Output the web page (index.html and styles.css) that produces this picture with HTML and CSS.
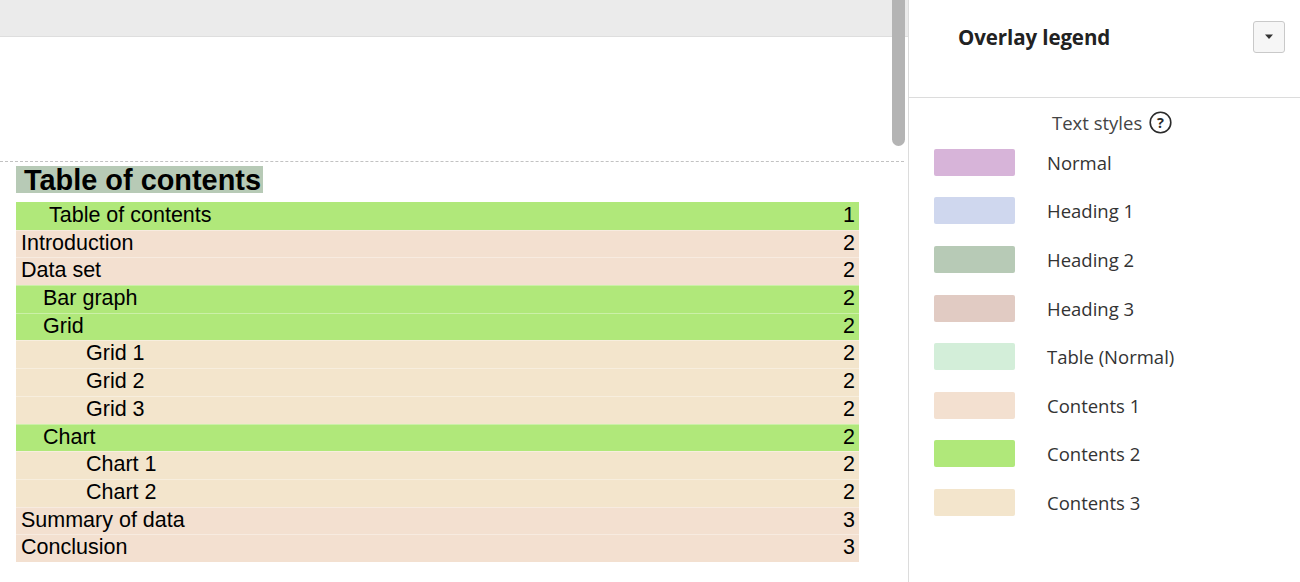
FILE: index.html
```html
<!DOCTYPE html>
<html lang="en">
<head>
<meta charset="utf-8">
<title>Overlay legend</title>
<link rel="stylesheet" href="styles.css">
</head>
<body>
<div class="app">
  <main class="doc">
    <div class="topbar"></div>
    <div class="page">
      <div class="page-break"></div>
      <h2 class="toc-heading"><span>Table of contents</span></h2>
      <div class="toc">
        <div class="row c2 self"><span>Table of contents</span><span>1</span></div>
        <div class="row c1"><span>Introduction</span><span>2</span></div>
        <div class="row c1"><span>Data set</span><span>2</span></div>
        <div class="row c2"><span>Bar graph</span><span>2</span></div>
        <div class="row c2"><span>Grid</span><span>2</span></div>
        <div class="row c3"><span>Grid 1</span><span>2</span></div>
        <div class="row c3"><span>Grid 2</span><span>2</span></div>
        <div class="row c3"><span>Grid 3</span><span>2</span></div>
        <div class="row c2"><span>Chart</span><span>2</span></div>
        <div class="row c3"><span>Chart 1</span><span>2</span></div>
        <div class="row c3"><span>Chart 2</span><span>2</span></div>
        <div class="row c1"><span>Summary of data</span><span>3</span></div>
        <div class="row c1"><span>Conclusion</span><span>3</span></div>
      </div>
    </div>
    <div class="scroll-thumb"></div>
  </main>
  <aside class="legend">
    <header class="legend-head">
      <h1 class="legend-title">Overlay legend</h1>
      <button class="dropdown" aria-label="Options">
        <svg width="10" height="6" viewBox="0 0 10 6"><path d="M1 0.5h8L5 5z" fill="#333"/></svg>
      </button>
    </header>
    <section class="styles">
      <div class="styles-title">Text styles
        <svg class="help" width="23" height="23" viewBox="0 0 23 23">
          <circle cx="11.5" cy="11.5" r="10.3" fill="none" stroke="#2a2a2a" stroke-width="1.6"/>
          <text x="11.5" y="16.8" text-anchor="middle" font-family="Open Sans, sans-serif" font-weight="700" font-size="14.5" fill="#2a2a2a">?</text>
        </svg>
      </div>
      <ul class="items">
        <li><span class="sw s-normal"></span>Normal</li>
        <li><span class="sw s-h1"></span>Heading 1</li>
        <li><span class="sw s-h2"></span>Heading 2</li>
        <li><span class="sw s-h3"></span>Heading 3</li>
        <li><span class="sw s-table"></span>Table (Normal)</li>
        <li><span class="sw s-c1"></span>Contents 1</li>
        <li><span class="sw s-c2"></span>Contents 2</li>
        <li><span class="sw s-c3"></span>Contents 3</li>
      </ul>
    </section>
  </aside>
</div>
</body>
</html>
```

FILE: styles.css
```css
* { box-sizing: border-box; }
html, body { margin: 0; padding: 0; background: #fff; }
body { width: 1300px; height: 582px; overflow: hidden; }

.app { display: flex; height: 582px; }

.doc {
  position: relative;
  width: 909px;
  flex: none;
  border-right: 1px solid #dcdcdc;
  overflow: hidden;
}
.topbar {
  height: 37px;
  background: #ebebeb;
  border-bottom: 1px solid #dedede;
}
.page { padding: 0 0 0 16px; }
.page-break {
  margin: 124px 4px 0 -16px;
  border-top: 1px dashed #c2c2c2;
}
.toc-heading {
  margin: 4px 0 0 0;
  font: 700 28.9px/27px "Liberation Sans", Arial, sans-serif;
  color: #000;
}
.toc-heading span {
  display: inline-block;
  height: 27px;
  padding: 0 2px 0 8px;
  background: #b7cab6;
  line-height: 28px;
}
.toc {
  margin-top: 8px;
  width: 843px;
  font: 400 21.5px "Liberation Sans", Arial, sans-serif;
  color: #000;
}
.row {
  display: flex;
  justify-content: space-between;
  align-items: center;
  height: 27.7px;
  padding-right: 4px;
  line-height: 27.7px;
}
.row + .row { box-shadow: inset 0 1px 0 rgba(255,255,255,0.35); }
.c1 { background: #f3e0d0; padding-left: 5px; }
.c2 { background: #b0e87a; padding-left: 27px; }
.c3 { background: #f3e5cc; padding-left: 70px; }
.c2.self { padding-left: 33px; }

.scroll-thumb {
  position: absolute;
  top: -8px;
  left: 892px;
  width: 13px;
  height: 154px;
  border-radius: 7px;
  background: #b4b4b4;
}

.legend {
  flex: 1;
  font-family: "Open Sans", "Noto Sans", sans-serif;
  color: #333;
}
.legend-head {
  height: 98px;
  border-bottom: 1px solid #dcdcdc;
  display: flex;
  align-items: flex-start;
  justify-content: space-between;
  padding: 21px 15px 0 49px;
}
.legend-title {
  margin: 2px 0 0 0;
  font-size: 20.5px;
  font-weight: 700;
  color: #222;
  line-height: 28px;
  letter-spacing: -0.1px;
}
.dropdown {
  width: 32px;
  height: 32px;
  border: 1px solid #c9c9c9;
  border-radius: 3px;
  background: #f6f6f6;
  padding: 0;
  display: flex;
  align-items: center;
  justify-content: center;
}
.styles { padding: 11px 0 0 25px; }
.styles-title {
  display: flex;
  align-items: center;
  gap: 7px;
  padding-left: 118px;
  font-size: 18.5px;
  color: #444;
  height: 26px;
}
.help { flex: none; }
.items { list-style: none; margin: 3px 0 0 0; padding: 0; }
.items li {
  display: flex;
  align-items: center;
  height: 48.6px;
  font-size: 18.5px;
  color: #333;
}
.sw {
  width: 81px;
  height: 27px;
  border-radius: 2px;
  margin-right: 32px;
  flex: none;
}
.s-normal { background: #d7b4d9; }
.s-h1 { background: #cfd7ee; }
.s-h2 { background: #b7cab6; }
.s-h3 { background: #e1cbc3; }
.s-table { background: #d3eed9; }
.s-c1 { background: #f3e0d0; }
.s-c2 { background: #b0e87a; }
.s-c3 { background: #f3e5cc; }
```
